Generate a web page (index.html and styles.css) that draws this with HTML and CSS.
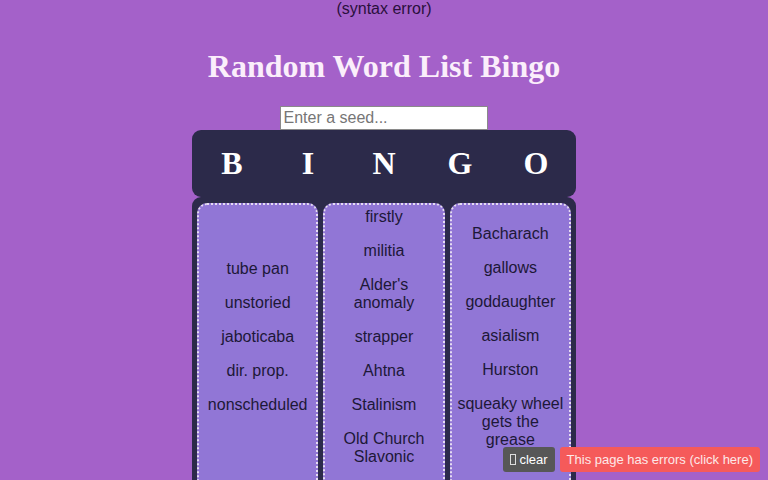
FILE: index.html
```html
<!DOCTYPE html>
<html>
<head>
<meta charset="utf-8">
<link rel="stylesheet" href="styles.css">
</head>
<body>
<div class="syntax">(syntax error)</div>
<h1 class="title">Random Word List Bingo</h1>
<div class="seed-row"><input class="seed" type="text" placeholder="Enter a seed..."></div>
<div class="board">
  <div class="head">
    <span>B</span><span>I</span><span>N</span><span>G</span><span>O</span>
  </div>
  <div class="grid">
    <div class="card">
      <p>tube pan</p>
      <p>unstoried</p>
      <p>jaboticaba</p>
      <p>dir. prop.</p>
      <p>nonscheduled</p>
    </div>
    <div class="card">
      <p>firstly</p>
      <p>militia</p>
      <p>Alder's anomaly</p>
      <p>strapper</p>
      <p>Ahtna</p>
      <p>Stalinism</p>
      <p>Old Church Slavonic</p>
    </div>
    <div class="card">
      <p>Bacharach</p>
      <p>gallows</p>
      <p>goddaughter</p>
      <p>asialism</p>
      <p>Hurston</p>
      <p>squeaky wheel gets the grease</p>
    </div>
  </div>
</div>
<div class="devbar">
  <button class="clear"><span class="tofu"></span> clear</button>
  <button class="errors">This page has errors (click here)</button>
</div>
</body>
</html>
```

FILE: styles.css
```css
html, body {
  margin: 0;
  padding: 0;
}
body {
  background: #a461c9;
  font-family: "Liberation Sans", Arial, sans-serif;
  font-size: 16px;
  min-height: 600px;
}
.syntax {
  text-align: center;
  color: #2a0f3c;
  line-height: 18px;
}
.title {
  margin: 30px 0 21px;
  text-align: center;
  font-family: "Liberation Serif", "Times New Roman", serif;
  font-weight: bold;
  font-size: 32px;
  line-height: 37px;
  color: #fbeefb;
}
.seed-row {
  display: flex;
  justify-content: center;
}
.seed {
  box-sizing: border-box;
  width: 208px;
  height: 24px;
  margin: 0 0 0 -1px;
  padding: 1px 3px;
  border: 1px solid #8a8a8a;
  background: #fff;
  font-family: "Liberation Sans", Arial, sans-serif;
  font-size: 16px;
  color: #222;
  outline: none;
}
.seed::placeholder {
  color: #767676;
}
.board {
  width: 384px;
  margin: 0 auto;
}
.head {
  display: grid;
  grid-template-columns: repeat(5, 1fr);
  align-items: center;
  height: 67px;
  padding: 0 2px;
  background: #2c2a4a;
  border-radius: 9px;
  font-family: "Liberation Serif", "Times New Roman", serif;
  font-weight: bold;
  font-size: 32px;
  color: #fff;
  text-align: center;
}
.grid {
  display: grid;
  grid-template-columns: repeat(3, 1fr);
  gap: 5px;
  padding: 6px 5px 5px;
  background: #2c2a4a;
  border-radius: 9px;
}
.card {
  box-sizing: border-box;
  height: 300px;
  padding-bottom: 32px;
  display: flex;
  flex-direction: column;
  justify-content: center;
  align-items: center;
  background: #9176d6;
  border: 2px dotted #e6dcf2;
  border-radius: 10px;
  text-align: center;
  color: #1d1838;
  line-height: 18px;
}
.card p {
  margin: 8px 4px;
}
.devbar {
  position: fixed;
  right: 8px;
  bottom: 8px;
  display: flex;
  gap: 5px;
}
.devbar button {
  height: 25px;
  border: none;
  border-radius: 3px;
  padding: 0 7px;
  font-family: "Liberation Sans", Arial, sans-serif;
  font-size: 13px;
}
.clear {
  background: #575757;
  color: #fff;
}
.tofu {
  display: inline-block;
  width: 4px;
  height: 9px;
  border: 1px solid #ddd;
  vertical-align: -1px;
}
.errors {
  background: #f55a5a;
  color: #fde8e8;
}
```
